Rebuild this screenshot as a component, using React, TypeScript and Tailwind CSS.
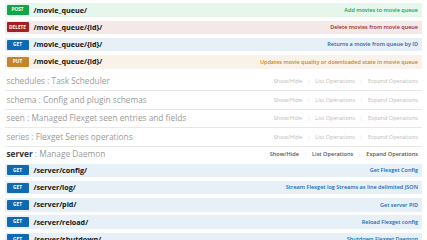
import React from 'react'

type Method = 'POST' | 'DELETE' | 'GET' | 'PUT'

const styles: Record<Method, { bar: string; badge: string; desc: string }> = {
  POST: { bar: 'bg-[#e7f6ec]', badge: 'bg-[#10a54a]', desc: 'text-[#10a54a]' },
  DELETE: { bar: 'bg-[#f5e8e8]', badge: 'bg-[#a41e22]', desc: 'text-[#a41e22]' },
  GET: { bar: 'bg-[#e7f0f7]', badge: 'bg-[#0f6ab4]', desc: 'text-[#0f6ab4]' },
  PUT: { bar: 'bg-[#f9f2e9]', badge: 'bg-[#c5862b]', desc: 'text-[#c5862b]' },
}

interface Op {
  method: Method
  path: string
  summary: string
}

const movieOps: Op[] = [
  { method: 'POST', path: '/movie_queue/', summary: 'Add movies to movie queue' },
  { method: 'DELETE', path: '/movie_queue/{id}/', summary: 'Delete movies from movie queue' },
  { method: 'GET', path: '/movie_queue/{id}/', summary: 'Returns a movie from queue by ID' },
  { method: 'PUT', path: '/movie_queue/{id}/', summary: 'Updates movie quality or downloaded state in movie queue' },
]

const serverOps: Op[] = [
  { method: 'GET', path: '/server/config/', summary: 'Get Flexget Config' },
  { method: 'GET', path: '/server/log/', summary: 'Stream Flexget log Streams as line delimited JSON' },
  { method: 'GET', path: '/server/pid/', summary: 'Get server PID' },
  { method: 'GET', path: '/server/reload/', summary: 'Reload Flexget config' },
  { method: 'GET', path: '/server/shutdown/', summary: 'Shutdown Flexget Daemon' },
]

const resources = [
  { name: 'schedules', desc: 'Task Scheduler' },
  { name: 'schema', desc: 'Config and plugin schemas' },
  { name: 'seen', desc: 'Managed Flexget seen entries and fields' },
  { name: 'series', desc: 'Flexget Series operations' },
]

function OpRow({ op }: { op: Op }) {
  const s = styles[op.method]
  return (
    <li className={`flex h-[13.5px] shrink-0 items-center pl-[1.5px] pr-[4px] ${s.bar}`}>
      <span
        className={`flex h-[10px] w-[22px] items-center justify-center rounded-[1px] text-[4.8px] font-bold uppercase text-white ${s.badge}`}
      >
        {op.method}
      </span>
      <span className="ml-[5px] text-[7.2px] font-bold text-[#111]">{op.path}</span>
      <span className={`ml-auto text-[5.5px] font-semibold ${s.desc}`}>{op.summary}</span>
    </li>
  )
}

function ResourceHeading({ name, desc, active }: { name: string; desc: string; active?: boolean }) {
  const linkColor = active ? 'text-[#555] font-semibold' : 'text-[#bbb]'
  return (
    <div
      className={`flex items-center justify-between ${active ? 'h-[16px]' : 'h-[18.5px] border-b border-[#e8e8e8]'}`}
    >
      <h2 className="pl-[1.5px] text-[8.3px] text-[#999]">
        <span className={active ? 'font-bold text-[#333]' : ''}>{name}</span> : {desc}
      </h2>
      <div className={`flex items-center pr-[4px] text-[5.6px] ${linkColor}`}>
        <span>Show/Hide</span>
        <span className="mx-[5px] font-normal text-[#ddd]">|</span>
        <span>List Operations</span>
        <span className="mx-[5px] font-normal text-[#ddd]">|</span>
        <span>Expand Operations</span>
      </div>
    </div>
  )
}

export default function App() {
  return (
    <div className="h-[240px] w-[427px] overflow-hidden bg-white px-[5px] pt-[3.3px] font-['Open_Sans',sans-serif]">
      <ul className="flex flex-col gap-[3.75px]">
        {movieOps.map((op, i) => (
          <OpRow key={i} op={op} />
        ))}
      </ul>
      <div className="mt-[4px]">
        {resources.map((r) => (
          <ResourceHeading key={r.name} name={r.name} desc={r.desc} />
        ))}
        <ResourceHeading name="server" desc="Manage Daemon" active />
      </div>
      <ul className="flex flex-col gap-[3.75px] pt-[1px]">
        {serverOps.map((op, i) => (
          <OpRow key={i} op={op} />
        ))}
      </ul>
    </div>
  )
}
